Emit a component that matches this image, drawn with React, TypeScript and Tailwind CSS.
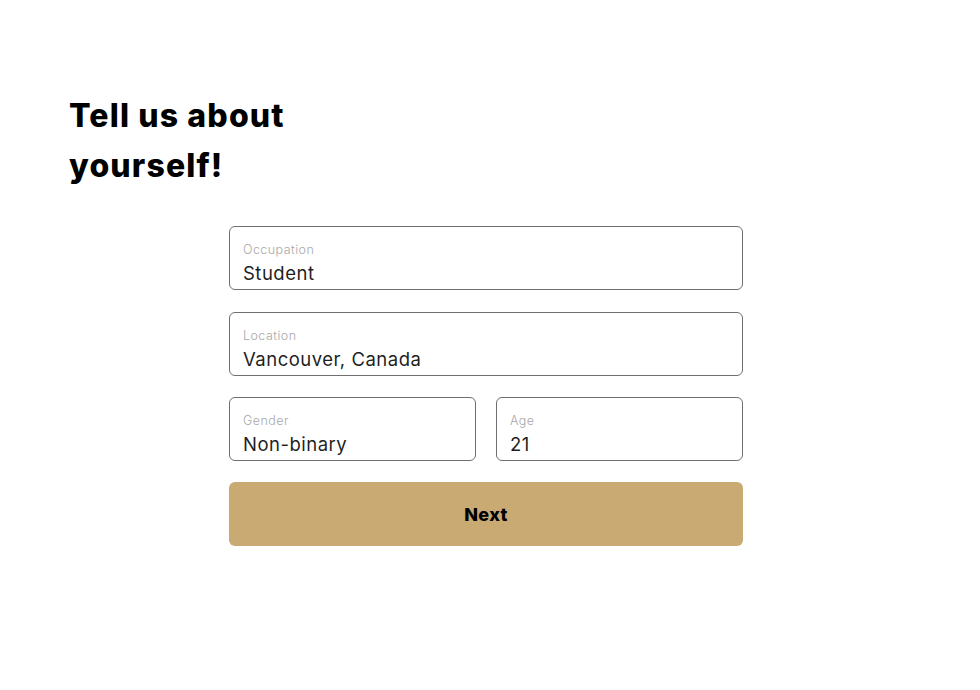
import React from "react";

function Field({ label, value, className = "" }: { label: string; value: string; className?: string }) {
  return (
    <div className={`h-[64px] rounded-[6px] border border-[#6f6f6f] px-[13px] pt-[14px] ${className}`}>
      <div className="text-[12.5px] leading-[18px] font-light tracking-[0.45px] text-[#a9a9a9]">{label}</div>
      <div className="mt-[2px] text-[18.5px] leading-[24px] tracking-[0.5px] text-[#1f1f1f]">{value}</div>
    </div>
  );
}

export default function App() {
  return (
    <div
      className="w-[980px] h-[690px] bg-white"
      style={{ fontFamily: "Inter, 'Noto Sans', sans-serif" }}
    >
      <div className="pt-[91px] pl-[69px]">
        <h1 className="text-[32px] leading-[50px] font-extrabold text-black tracking-[1.15px]">
          Tell us about
          <br />
          yourself!
        </h1>
      </div>
      <div className="ml-[229px] mt-[35px] w-[514px] flex flex-col gap-[21px]">
        <Field label="Occupation" value="Student" className="mb-[1px]" />
        <Field label="Location" value="Vancouver, Canada" />
        <div className="flex gap-[20px]">
          <Field label="Gender" value="Non-binary" className="flex-1" />
          <Field label="Age" value="21" className="flex-1" />
        </div>
        <button className="h-[64px] rounded-[6px] bg-[#c9aa72] text-[18px] font-extrabold tracking-[0.4px] text-black">
          Next
        </button>
      </div>
    </div>
  );
}
